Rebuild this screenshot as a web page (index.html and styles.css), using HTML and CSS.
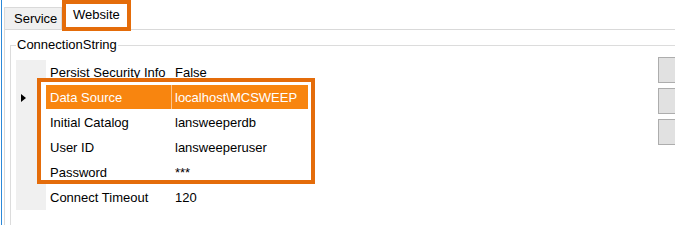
FILE: index.html
```html
<!DOCTYPE html>
<html>
<head>
<meta charset="utf-8">
<link rel="stylesheet" href="styles.css">
</head>
<body>
<div class="frame">
  <div class="tabs">
    <div class="tab">Service</div>
    <div class="tab tab-active">Website</div>
  </div>
  <div class="panel">
    <fieldset class="group">
      <legend class="group-title">ConnectionString</legend>
      <div class="group-body">
        <div class="grid">
          <div class="row"><div class="rh"></div><div class="name">Persist Security Info</div><div class="val">False</div></div>
          <div class="row sel"><div class="rh"><span class="arrow"></span></div><div class="name">Data Source</div><div class="val">localhost\MCSWEEP</div></div>
          <div class="row"><div class="rh"></div><div class="name">Initial Catalog</div><div class="val">lansweeperdb</div></div>
          <div class="row"><div class="rh"></div><div class="name">User ID</div><div class="val">lansweeperuser</div></div>
          <div class="row"><div class="rh"></div><div class="name">Password</div><div class="val">***</div></div>
          <div class="row"><div class="rh"></div><div class="name">Connect Timeout</div><div class="val">120</div></div>
          <div class="callout"></div>
        </div>
        <div class="buttons">
          <div class="btn"></div>
          <div class="btn"></div>
          <div class="btn"></div>
        </div>
      </div>
    </fieldset>
  </div>
</div>
</body>
</html>
```
FILE: styles.css
```css
html, body {
  margin: 0;
  padding: 0;
  overflow: hidden;
  background: #ffffff;
}
body {
  width: 675px;
  height: 225px;
  font-family: "Liberation Sans", Arial, sans-serif;
  font-size: 13px;
  color: #000;
}
.frame {
  margin-left: 1px;
  border-left: 1px solid #2b88d8;
  height: 225px;
  width: 673px;
  overflow: hidden;
}
.tabs {
  height: 29px;
  display: flex;
  align-items: flex-end;
  padding-left: 2px;
  position: relative;
  z-index: 2;
}
.tab {
  box-sizing: border-box;
  width: 58px;
  height: 22px;
  border: 1px solid #d9d9d9;
  border-bottom: none;
  background: #f0f0f0;
  padding-left: 9px;
  line-height: 21px;
}
.tab-active {
  width: 69px;
  height: 31px;
  margin-bottom: -2px;
  border: 4px solid #e46c0a;
  background: #fff;
  padding-left: 7px;
  line-height: 22px;
}
.panel {
  margin-left: 2px;
  border-left: 1px solid #d9d9d9;
  border-top: 1px solid #d9d9d9;
  height: 195px;
}
.group {
  box-sizing: border-box;
  margin: 7px 0 0 5px;
  padding: 0;
  width: 665px;
  min-width: 0;
  height: 188px;
  border: 1px solid #dcdcdc;
  border-right: none;
  border-bottom: none;
}
.group-title {
  margin-left: 5px;
  padding: 0 1px;
  line-height: 16px;
  font-size: 13px;
}
.group-body {
  display: flex;
  align-items: flex-start;
}
.grid {
  position: relative;
  margin: 7px 0 0 5px;
  width: 292px;
}
.row {
  display: flex;
  height: 25px;
  line-height: 25px;
  white-space: nowrap;
}
.rh {
  width: 30px;
  background: #f0f0f0;
  display: flex;
  align-items: center;
}
.arrow {
  margin-left: 5px;
  width: 0;
  height: 0;
  border-top: 4.5px solid transparent;
  border-bottom: 4.5px solid transparent;
  border-left: 5px solid #000;
}
.name {
  box-sizing: border-box;
  width: 126px;
  padding-left: 4px;
}
.val {
  box-sizing: border-box;
  width: 136px;
  padding-left: 3px;
}
.sel .name,
.sel .val {
  background: #f8850f;
  color: #fff;
  height: 24px;
  line-height: 25px;
}
.sel .name {
  border-right: 1px solid #fcc48e;
}
.callout {
  position: absolute;
  left: 21px;
  top: 18px;
  width: 278px;
  height: 106px;
  box-sizing: border-box;
  border: 4px solid #e46c0a;
  box-shadow: inset 0 0 0 1px #fff, inset 5px 0 0 #fff;
  pointer-events: none;
}
.buttons {
  margin: 4px 0 0 auto;
  display: flex;
  flex-direction: column;
  gap: 5px;
}
.btn {
  box-sizing: border-box;
  width: 17px;
  height: 26px;
  background: #e1e1e1;
  border: 1px solid #adadad;
  border-right: none;
}
```
